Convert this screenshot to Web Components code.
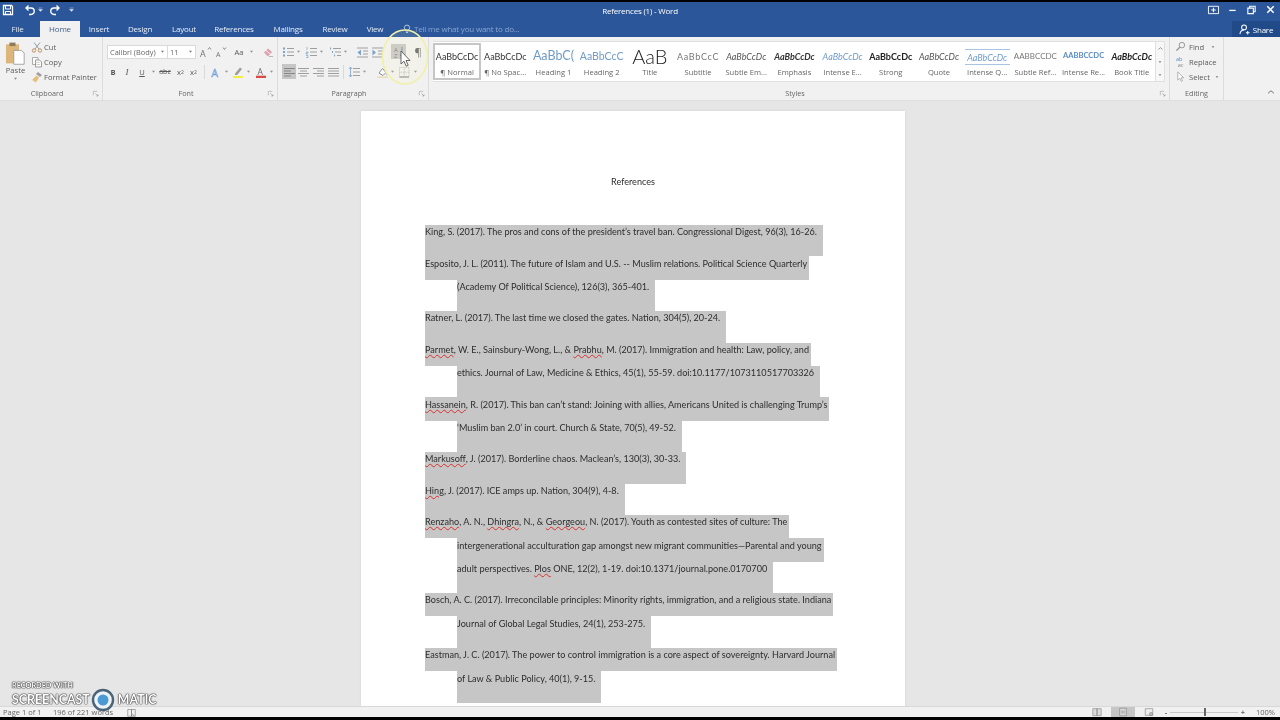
<!DOCTYPE html>
<html lang="en">
<head>
<meta charset="utf-8">
<title>References (1) - Word</title>
<style>
  html, body { margin: 0; height: 100%; background: #000; overflow: hidden; }
</style>
</head>
<body>
<word-app>
  <word-titlebar></word-titlebar>
  <word-ribbon></word-ribbon>
  <word-document>
    <ref-entry><ref-line>King, S. (2017). The pros and cons of the president’s travel ban. Congressional Digest, 96(3), 16-26.</ref-line></ref-entry>
    <ref-entry>
      <ref-line>Esposito, J. L. (2011). The future of Islam and U.S. -- Muslim relations. Political Science Quarterly</ref-line>
      <ref-line>(Academy Of Political Science), 126(3), 365-401.</ref-line>
    </ref-entry>
    <ref-entry><ref-line>Ratner, L. (2017). The last time we closed the gates. Nation, 304(5), 20-24.</ref-line></ref-entry>
    <ref-entry>
      <ref-line><u>Parmet</u>, W. E., Sainsbury-Wong, L., &amp; <u>Prabhu</u>, M. (2017). Immigration and health: Law, policy, and</ref-line>
      <ref-line>ethics. Journal of Law, Medicine &amp; Ethics, 45(1), 55-59. doi:10.1177/1073110517703326</ref-line>
    </ref-entry>
    <ref-entry>
      <ref-line><u>Hassanein</u>, R. (2017). This ban can’t stand: Joining with allies, Americans United is challenging Trump’s</ref-line>
      <ref-line>‘Muslim ban 2.0’ in court. Church &amp; State, 70(5), 49-52.</ref-line>
    </ref-entry>
    <ref-entry><ref-line><u>Markusoff</u>, J. (2017). Borderline chaos. Maclean’s, 130(3), 30-33.</ref-line></ref-entry>
    <ref-entry><ref-line><u>Hing</u>, J. (2017). ICE amps up. Nation, 304(9), 4-8.</ref-line></ref-entry>
    <ref-entry>
      <ref-line><u>Renzaho</u>, A. N., <u>Dhingra</u>, N., &amp; <u>Georgeou</u>, N. (2017). Youth as contested sites of culture: The</ref-line>
      <ref-line>intergenerational acculturation gap amongst new migrant communities—Parental and young</ref-line>
      <ref-line>adult perspectives. <u>Plos</u> ONE, 12(2), 1-19. doi:10.1371/journal.pone.0170700</ref-line>
    </ref-entry>
    <ref-entry>
      <ref-line>Bosch, A. C. (2017). Irreconcilable principles: Minority rights, immigration, and a religious state. Indiana</ref-line>
      <ref-line>Journal of Global Legal Studies, 24(1), 253-275.</ref-line>
    </ref-entry>
    <ref-entry>
      <ref-line>Eastman, J. C. (2017). The power to control immigration is a core aspect of sovereignty. Harvard Journal</ref-line>
      <ref-line>of Law &amp; Public Policy, 40(1), 9-15.</ref-line>
    </ref-entry>
  </word-document>
  <word-statusbar></word-statusbar>
  <cursor-ring></cursor-ring>
  <cast-mark></cast-mark>
</word-app>

<script>
const UI_FONT = '"Open Sans", "Noto Sans", sans-serif';

const ICONS = {
  caret: '<path d="M4 5h4L6 7.5z" fill="#777"/>',
  save: '<path d="M1.5 1.5h8l1 1v8h-9z" fill="none" stroke="#fff" stroke-width="1.3"/><path d="M3.5 2v3h5V2M3.5 10.5V7.5h5v3" fill="none" stroke="#fff"/>',
  undo: '<path d="M4.5 1.5 2 4l2.5 2.5M2.5 4H7a2.7 2.7 0 0 1 0 6.5H5" fill="none" stroke="#fff" stroke-width="1.4"/>',
  redo: '<path d="M7.5 1.5 10 4 7.5 6.5M9.5 4H5a2.7 2.7 0 0 0 0 6.5h2" fill="none" stroke="#fff" stroke-width="1.4"/>',
  qat: '<path d="M3.5 4h5M3.5 6h5L6 8.5z" fill="#dfe7f3" stroke="#dfe7f3" stroke-width=".6"/>',
  ribbonopts: '<path d="M.5 2.5h11v8H.5z" fill="none" stroke="#fff"/><path d="M6 4v5M3.5 6.5h5" stroke="#fff" stroke-width="1.2"/>',
  minimize: '<path d="M2.5 7h7" stroke="#fff" stroke-width="1.4"/>',
  restore: '<path d="M2 4.5h6v6H2zM4 4.5v-2h6v6H8" fill="none" stroke="#fff" stroke-width="1.2"/>',
  close: '<path d="M2.5 2.5l7 7M9.5 2.5l-7 7" stroke="#fff" stroke-width="1.7"/>',
  bulb: '<circle cx="6" cy="4.5" r="3.2" fill="none" stroke="#c9d5ea"/><path d="M4.5 8.5h3M4.7 10.2h2.6" stroke="#c9d5ea"/>',
  person: '<circle cx="5.5" cy="3.8" r="2.6" fill="none" stroke="#fff" stroke-width="1.1"/><path d="M1 11c.4-3 2-4.4 4.5-4.4M7.5 9.5h4M9.5 7.5v4" fill="none" stroke="#fff" stroke-width="1.1"/>',
  cut: '<path d="M3 1.5 8 8M9 1.5 4 8" stroke="#7a8793" stroke-width="1"/><circle cx="3" cy="9.5" r="1.7" fill="none" stroke="#b07a3c"/><circle cx="9" cy="9.5" r="1.7" fill="none" stroke="#b07a3c"/>',
  copy: '<path d="M1.5 1.5h5.5v7H1.5z" fill="#fff" stroke="#9a9a9a"/><path d="M4.5 4h4l2 2v5h-6z" fill="#fff" stroke="#8a8a8a"/><path d="M5.5 6.5h3M5.5 8.5h3.5" stroke="#c4a877" stroke-width=".7"/>',
  painter: '<path d="M7 1l4 3-2 2-4-3z" fill="#8b8b8b"/><path d="M5.5 4.5 8 6.5 5 11.5 1 9z" fill="#e3b25a"/>',
  paste: '<path d="M1 5h15v22H1z" fill="#dcb67a"/><path d="M5 3h7v4H5z" fill="#8f7a5c"/><path d="M10 12h9l3 3v13H10z" fill="#fff" stroke="#9b9b9b"/>',
  pastecaret: '<path d="M4 5h4L6 7.5z" fill="#888"/>',
  grow: '<text x="0" y="10.500" font-size="9" font-family="Open Sans" fill="#555">A</text><path d="M8 3.5 9.5 1.5 11 3.5" fill="none" stroke="#555" stroke-width=".8"/>',
  shrink: '<text x="1" y="10.500" font-size="7" font-family="Open Sans" fill="#555">A</text><path d="M8 1.5 9.5 3.5 11 1.5" fill="none" stroke="#555" stroke-width=".8"/>',
  eraser: '<path d="M2 6.5 6 2.5l4 3.5-4 4.5z" fill="#d98c9c"/><path d="M4 4.5l4 3.5" stroke="#fff" stroke-width=".9"/><path d="M7 10.5h4" stroke="#a8a8a8"/>',
  textfx: '<text x="1.500" y="11" font-size="10.500" font-family="Open Sans" fill="#cfe2f6" stroke="#4d8ad0" stroke-width=".6">A</text>',
  highlight: '<path d="M3 7.5 8 1.5l2 1.6-4.8 6H3z" fill="#8a8a8a"/><path d="M1 10h10v2H1z" fill="#f2ee1a"/>',
  fontcolor: '<text x="2.500" y="9" font-size="8.500" font-family="Open Sans" fill="#444">A</text><path d="M1 9.7h10V12H1z" fill="#d8201c"/>',
  bullets: '<g stroke="#8a8a8a"><path d="M5 2.5h7M5 6h7M5 9.5h7"/></g><g fill="#5f8fc4"><rect x="1" y="1.5" width="2" height="2"/><rect x="1" y="5" width="2" height="2"/><rect x="1" y="8.5" width="2" height="2"/></g>',
  numbers: '<g stroke="#8a8a8a"><path d="M5 2.5h7M5 6h7M5 9.5h7"/></g><path d="M2 1v3M1 6h2v1H1v1h2M1 9.5h2v2H1" fill="none" stroke="#5f8fc4" stroke-width=".7"/>',
  multilevel: '<g stroke="#8a8a8a"><path d="M4 2.5h8M6 6h6M8 9.5h4"/></g><path d="M1.5 1.5v2M3.5 5v2M5.5 8.5v2" stroke="#5f8fc4"/>',
  indentdec: '<path d="M1 2h11M7 5h5M7 8h5M1 11h11" stroke="#8a8a8a"/><path d="M5 3.5 1.5 6.5 5 9.5z" fill="#5f8fc4"/>',
  indentinc: '<path d="M1 2h11M7 5h5M7 8h5M1 11h11" stroke="#8a8a8a"/><path d="M1.5 3.5 5 6.5 1.5 9.5z" fill="#5f8fc4"/>',
  sort: '<text x="1" y="5.5" font-size="6" font-family="Open Sans" fill="#666">A</text><text x="1" y="11.5" font-size="6" font-family="Open Sans" fill="#666">Z</text><path d="M9 1v9.5M7 8.5l2 2.5 2-2.5" fill="none" stroke="#5d7ea8"/>',
  alignl: '<path d="M1 2.5h11M1 5h7M1 7.5h11M1 10h7" stroke="#777"/>',
  alignc: '<path d="M1 2.5h11M3 5h7M1 7.5h11M3 10h7" stroke="#8a8a8a"/>',
  alignr: '<path d="M1 2.5h11M5 5h7M1 7.5h11M5 10h7" stroke="#8a8a8a"/>',
  justify: '<path d="M1 2.5h11M1 5h11M1 7.5h11M1 10h11" stroke="#8a8a8a"/>',
  linespace: '<path d="M5 2.5h7M5 6h7M5 9.5h7" stroke="#8a8a8a"/><path d="M2.5 1v10M1 3l1.5-2L4 3M1 9l1.5 2L4 9" fill="none" stroke="#5f8fc4" stroke-width=".8"/>',
  shading: '<path d="M3 7 6.5 2.5l3.5 4-3 3z" fill="#fff" stroke="#777"/><path d="M1 10.5h11V12H1z" fill="#e8d8a8"/><path d="M10.5 7.5c1 1.200 1 2 0 2" fill="#5b8fc9"/>',
  borders: '<path d="M1.500 1.500h9.500v9.500H1.500zM6.250 1.500v9.500M1.500 6.250h9.500" fill="none" stroke="#b4b4b4" stroke-dasharray="1 .7"/><path d="M1.500 11h9.500" stroke="#666"/>',
  find: '<circle cx="7.500" cy="4.500" r="3" fill="none" stroke="#777"/><path d="M5.200 6.800 1.500 10.500" stroke="#777" stroke-width="1.400"/>',
  replace: '<text x="1" y="5.500" font-size="6" font-family="Open Sans" fill="#2f6fb5">ab</text><text x="3" y="11.500" font-size="6" font-family="Open Sans" fill="#666">ac</text>',
  select: '<path d="M3 1v9l2.200-2 1.600 3.400 1.400-.7-1.600-3.300h3z" fill="#fff" stroke="#8a8a8a" stroke-width=".8"/>',
  launcher: '<path d="M2 2h6M2 2v6" stroke="#999" stroke-width=".8" fill="none"/><path d="M9 9 5 5M9 9V6.500M9 9H6.500" stroke="#888" stroke-width=".8" fill="none"/>',
  collapse: '<path d="M2.500 7.500 6 4.500l3.500 3" fill="none" stroke="#666" stroke-width="1.100"/>',
  book: '<path d="M1 2h5v9H1zM6 2h5v9H6z" fill="#f1f1f1" stroke="#777" stroke-width=".8"/><path d="M7 8l3 3" stroke="#777"/>',
  viewread: '<path d="M1 2h5v8.500H1zM6 2h5v8.500H6z" fill="#dcdcdc" stroke="#8a8a8a" stroke-width=".8"/>',
  viewprint: '<path d="M2 1.500h8v9H2z" fill="#d8d8d8" stroke="#8a8a8a" stroke-width=".8"/><path d="M3.500 5h5M3.500 7h5" stroke="#8a8a8a" stroke-width=".7"/>',
  viewweb: '<path d="M1.500 2h9v8h-9z" fill="#eee" stroke="#8a8a8a" stroke-width=".8"/><circle cx="8.500" cy="8.500" r="2" fill="#bbb" stroke="#777" stroke-width=".6"/>'
};

function iconSvg(name, w = 12, h = 12) {
  const box = name === "paste" ? "0 0 24 30" : "0 0 12 12";
  return `<svg width="${w}" height="${h}" viewBox="${box}" style="display:block;flex:none;overflow:visible">${ICONS[name] || ""}</svg>`;
}

class WordApp extends HTMLElement {
  connectedCallback() {
    this.attachShadow({ mode: "open" }).innerHTML = `
      <style>
        :host { display: flex; flex-direction: column; width: 1280px; height: 715px;
          position: relative; overflow: hidden; background: #e6e6e6; filter: blur(.35px); font-family: ${UI_FONT}; }
      </style>
      <slot></slot>`;
    this.style.marginTop = "2px";
  }
}

class WordTitlebar extends HTMLElement {
  connectedCallback() {
    const tabs = [["File", 35], ["Home", 40], ["Insert", 38], ["Design", 44], ["Layout", 44], ["References", 56], ["Mailings", 52], ["Review", 42], ["View", 38]];
    this.attachShadow({ mode: "open" }).innerHTML = `
      <style>
        :host { display: block; flex: none; height: 35px; background: #2b579a; color: #fff; font-size: 8px; letter-spacing: -.2px; }
        .top { height: 19px; display: grid; grid-template-columns: 1fr auto 1fr; align-items: center; }
        .qat, .win { display: flex; align-items: center; }
        .qat { padding-left: 2px; margin-top: -4px; }
        .win { justify-content: flex-end; margin-top: -4px; }
        .win span { width: 19px; display: flex; justify-content: center; }
        .name { margin-top: -3px; }
        .tabs { height: 16px; display: flex; align-items: stretch; }
        .tab { display: flex; align-items: center; justify-content: center; flex: none; color: #e4ebf5; padding-bottom: 1px; box-sizing: border-box; }
        .tab.on { background: #f1f1f1; color: #44608c; margin-left: 5px; }
        .tell { display: flex; align-items: center; gap: 2px; margin-left: 8px; color: #87a4d2; padding-bottom: 1px; }
        .share { margin-left: auto; width: 48px; background: #204a88; display: flex; align-items: center; justify-content: center; gap: 3px; }
      </style>
      <div class="top">
        <div class="qat">
          <span style="width:12px">${iconSvg("save")}</span>
          <span style="width:10px"></span>
          <span>${iconSvg("undo")}</span><span>${iconSvg("qat", 9, 9)}</span>
          <span style="width:4px"></span>
          <span>${iconSvg("redo")}</span>
          <span style="width:6px"></span>
          <span>${iconSvg("qat", 9, 9)}</span>
        </div>
        <div class="name">References (1) - Word</div>
        <div class="win">
          <span>${iconSvg("ribbonopts", 11, 11)}</span>
          <span>${iconSvg("minimize", 11, 11)}</span>
          <span>${iconSvg("restore", 11, 11)}</span>
          <span>${iconSvg("close", 11, 11)}</span>
        </div>
      </div>
      <div class="tabs">
        ${tabs.map(([t, w]) => `<div class="tab ${t === "Home" ? "on" : ""}" style="width:${w}px">${t}</div>`).join("")}
        <div class="tell">${iconSvg("bulb", 10, 10)}<span>Tell me what you want to do...</span></div>
        <div class="share">${iconSvg("person", 11, 11)}<span>Share</span></div>
      </div>`;
  }
}

class RibbonTool extends HTMLElement {
  connectedCallback() {
    const w = this.getAttribute("w") || 14;
    const icon = this.getAttribute("icon");
    const size = this.getAttribute("size") || 12;
    const root = this.attachShadow({ mode: "open" });
    root.innerHTML = `
      <style>
        :host { display: flex; flex: none; align-items: center; justify-content: center; height: 15px; width: ${w}px;
          font-size: 7.6px; color: #5a5a5a; white-space: nowrap; }
        :host([on]) { background: #c6c6c6; }
        svg { opacity: .8; }
      </style>
      ${icon ? iconSvg(icon, size, size) : ""}<slot></slot>`;
  }
}

class RibbonGroup extends HTMLElement {
  connectedCallback() {
    const hasLauncher = this.hasAttribute("launcher");
    const launcher = hasLauncher ? `<span class="launch">${iconSvg("launcher", 8, 8)}</span>` : "";
    this.attachShadow({ mode: "open" }).innerHTML = `
      <style>
        :host { display: flex; flex-direction: column; flex: none; box-sizing: border-box; width: ${this.getAttribute("w")}px;
          border-right: 1px solid #dcdcdc; position: relative; }
        .body { height: 51px; padding-top: 7px; box-sizing: border-box; }
        .label { height: 10px; line-height: 10px; text-align: center; font-size: 7.2px; color: #666; position: relative;
          padding-right: ${hasLauncher ? 8 : 0}px; }
        .launch { position: absolute; right: 2px; top: 2px; }
      </style>
      <div class="body"><slot></slot></div>
      <div class="label">${this.getAttribute("label")}${launcher}</div>`;
  }
}

class StyleChip extends HTMLElement {
  connectedCallback() {
    const prev = this.getAttribute("preview") || "AaBbCcDc";
    this.attachShadow({ mode: "open" }).innerHTML = `
      <style>
        :host { display: flex; flex-direction: column; align-items: center; flex: none; width: 48.2px; height: 37px; box-sizing: border-box; margin-top: 1px; }
        :host([on]) { outline: 2px solid #c6c6c6; outline-offset: -2px; }
        .prev { height: 22px; width: 45px; overflow: hidden; white-space: nowrap; display: flex; align-items: center; justify-content: center;
          margin-top: 2px; font-family: Lato, sans-serif; color: #333; font-size: 9px; line-height: 1; }
        .name { font-size: 7.6px; color: #666; white-space: nowrap; }
      </style>
      <div class="prev" style="${this.getAttribute("look") || ""}"><span>${prev}</span></div>
      <div class="name">${this.getAttribute("name")}</div>`;
  }
}

class WordRibbon extends HTMLElement {
  connectedCallback() {
    const chips = [
      ["¶ Normal", "", "", "on"],
      ["¶ No Spac...", "", ""],
      ["Heading 1", "color:#6f9bcb;font-size:12.5px", "AaBbC("],
      ["Heading 2", "color:#6f9bcb;font-size:10.5px", "AaBbCcC"],
      ["Title", "font-size:20px;font-weight:300;color:#222", "AaB"],
      ["Subtitle", "color:#777;letter-spacing:.7px", "AaBbCcC"],
      ["Subtle Em...", "font-style:italic;color:#555", ""],
      ["Emphasis", "font-style:italic;color:#333;font-weight:700", ""],
      ["Intense E...", "font-style:italic;color:#6f9bd0", ""],
      ["Strong", "font-weight:700;color:#222", ""],
      ["Quote", "font-style:italic;color:#555", ""],
      ["Intense Q...", "font-style:italic;color:#6f9bd0;border-top:1px solid #a9c3e3;border-bottom:1px solid #a9c3e3;height:14px;margin:6px 0 2px", ""],
      ["Subtle Ref...", "color:#777;font-size:8px", "AABBCCDC"],
      ["Intense Re...", "color:#5a8cc6;font-size:7.600px;font-weight:700", "AABBCCDC"],
      ["Book Title", "font-style:italic;font-weight:700;color:#222", ""]
    ];
    this.attachShadow({ mode: "open" }).innerHTML = `
      <style>
        :host { display: flex; flex: none; height: 63px; background: #f1f1f1; border-bottom: 1px solid #dedede; box-sizing: content-box; }
        .row { display: flex; align-items: center; }
        .clip { display: flex; margin-top: -3px; }
        .paste { width: 31px; display: flex; flex-direction: column; align-items: center; font-size: 7.6px; color: #5a5a5a; }
        .paste svg { margin-top: -1px; }
        .clipitems { display: flex; flex-direction: column; margin-top: -2px; }
        .clipitems r-tool { justify-content: flex-start; }
        .combo { background: #fff; border: 1px solid #dadada; box-sizing: border-box; height: 14px; display: flex; align-items: center; font-size: 7.4px; color: #666; justify-content: space-between; padding-left: 2px; white-space: nowrap; }
        .sep { width: 1px; height: 14px; background: #dadada; flex: none; }
        .sp { display: block; flex: none; }
        .rows { display: flex; flex-direction: column; gap: 5px; }
        .gallery { display: flex; margin-left: 4px; width: 723px; height: 41px; background: #fff; box-sizing: border-box; border: 1px solid #e0e0e0; border-left: 0; }
        .scroll { width: 9px; height: 41px; display: flex; flex-direction: column; background: #f7f7f7; border: 1px solid #e0e0e0; border-left: 0; box-sizing: border-box; }
        .scroll span { flex: 1; display: flex; align-items: center; justify-content: center; }
        .styles { display: flex; margin-top: -3px; }
        .collapse { margin-left: auto; display: flex; align-items: flex-end; padding: 0 4px 3px 0; }
        .edit { display: flex; flex-direction: column; margin-top: -5px; padding-left: 5px; }
        .edit r-tool { justify-content: flex-start; gap: 3px; width: 48px; }
      </style>
      <r-group w="103" label="Clipboard" launcher>
        <div class="clip">
          <div class="paste">${iconSvg("paste", 21, 26)}<span style="margin-top:-1px">Paste</span>${iconSvg("pastecaret", 9, 9)}</div>
          <div class="clipitems">
            <r-tool w="66" icon="cut"><span style="margin-left:1px">Cut</span></r-tool>
            <r-tool w="66" icon="copy"><span style="margin-left:1px">Copy</span></r-tool>
            <r-tool w="66" icon="painter"><span style="margin-left:1px">Format Painter</span></r-tool>
          </div>
        </div>
      </r-group>
      <r-group w="175" label="Font" launcher>
        <div class="rows">
          <div class="row">
            <i class="sp" style="width:4px"></i>
            <div class="combo" style="width:61px"><span>Calibri (Body)</span>${iconSvg("caret", 9, 9)}</div>
            <div class="combo" style="width:29px;margin-left:-1px"><span>11</span>${iconSvg("caret", 9, 9)}</div>
            <i class="sp" style="width:2px"></i>
            <r-tool w="15" icon="grow"></r-tool>
            <r-tool w="15" icon="shrink"></r-tool>
            <i class="sp" style="width:2px"></i>
            <r-tool w="18">Aa</r-tool><r-tool w="7" icon="caret" size="9"></r-tool>
            <i class="sp" style="width:6px"></i>
            <r-tool w="14" icon="eraser"></r-tool>
          </div>
          <div class="row">
            <i class="sp" style="width:3px"></i>
            <r-tool w="14"><b>B</b></r-tool>
            <r-tool w="14"><i style="font-family:Liberation Serif;font-size:9px">I</i></r-tool>
            <r-tool w="16"><u>U</u></r-tool><r-tool w="7" icon="caret" size="9"></r-tool>
            <r-tool w="16"><s style="font-size:7px">abc</s></r-tool>
            <i class="sp" style="width:1px"></i>
            <r-tool w="13">x<sub style="font-size:5px">2</sub></r-tool>
            <r-tool w="13">x<sup style="font-size:5px">2</sup></r-tool>
            <i class="sp" style="width:4px"></i><span class="sep"></span><i class="sp" style="width:4px"></i>
            <r-tool w="14" icon="textfx"></r-tool><r-tool w="7" icon="caret" size="9"></r-tool>
            <i class="sp" style="width:1px"></i>
            <r-tool w="14" icon="highlight"></r-tool><r-tool w="7" icon="caret" size="9"></r-tool>
            <i class="sp" style="width:2px"></i>
            <r-tool w="14" icon="fontcolor"></r-tool><r-tool w="7" icon="caret" size="9"></r-tool>
          </div>
        </div>
      </r-group>
      <r-group w="151" label="Paragraph" launcher>
        <div class="rows">
          <div class="row">
            <i class="sp" style="width:3px"></i>
            <r-tool w="14" icon="bullets"></r-tool><r-tool w="7" icon="caret" size="9"></r-tool>
            <i class="sp" style="width:2px"></i>
            <r-tool w="14" icon="numbers"></r-tool><r-tool w="7" icon="caret" size="9"></r-tool>
            <i class="sp" style="width:3px"></i>
            <r-tool w="14" icon="multilevel"></r-tool><r-tool w="7" icon="caret" size="9"></r-tool>
            <i class="sp" style="width:6px"></i>
            <r-tool w="14" icon="indentdec"></r-tool>
            <i class="sp" style="width:1px"></i>
            <r-tool w="14" icon="indentinc"></r-tool>
            <i class="sp" style="width:7px"></i>
            <r-tool w="15" icon="sort" on></r-tool>
            <i class="sp" style="width:5px"></i>
            <r-tool w="14"><span style="font-size:11px;color:#666">¶</span></r-tool>
          </div>
          <div class="row">
            <i class="sp" style="width:4px"></i>
            <r-tool w="14" icon="alignl" on></r-tool>
            <r-tool w="14" icon="alignc"></r-tool>
            <i class="sp" style="width:1px"></i>
            <r-tool w="14" icon="alignr"></r-tool>
            <i class="sp" style="width:1px"></i>
            <r-tool w="14" icon="justify"></r-tool>
            <i class="sp" style="width:3px"></i><span class="sep"></span><i class="sp" style="width:3px"></i>
            <r-tool w="14" icon="linespace"></r-tool><r-tool w="7" icon="caret" size="9"></r-tool>
            <i class="sp" style="width:7px"></i>
            <r-tool w="14" icon="shading"></r-tool><r-tool w="7" icon="caret" size="9"></r-tool>
            <i class="sp" style="width:1px"></i>
            <r-tool w="14" icon="borders"></r-tool><r-tool w="8" icon="caret" size="9"></r-tool>
          </div>
        </div>
      </r-group>
      <r-group w="741" label="Styles" launcher>
        <div class="styles">
          <div class="gallery">
            ${chips.map(([n, look, prev, on]) => `<style-chip name="${n}" look="${look}" ${prev ? `preview="${prev}"` : ""} ${on ? "on" : ""}></style-chip>`).join("")}
          </div>
          <div class="scroll">
            <span>${iconSvg("collapse", 7, 7)}</span>
            <span>${iconSvg("caret", 8, 8)}</span>
            <span>${iconSvg("caret", 8, 8)}</span>
          </div>
        </div>
      </r-group>
      <r-group w="54" label="Editing">
        <div class="edit">
          <r-tool icon="find" size="11"><span>Find</span><span style="margin-left:2px">${iconSvg("caret", 8, 8)}</span></r-tool>
          <r-tool icon="replace" size="11"><span>Replace</span></r-tool>
          <r-tool icon="select" size="11"><span>Select</span><span>${iconSvg("caret", 8, 8)}</span></r-tool>
        </div>
      </r-group>
      <div class="collapse">${iconSvg("collapse", 10, 10)}</div>`;
  }
}

class WordDocument extends HTMLElement {
  connectedCallback() {
    this.attachShadow({ mode: "open" }).innerHTML = `
      <style>
        :host { display: flex; justify-content: flex-start; flex: 1; min-height: 0; overflow: hidden; padding: 10px 0 0 361px; background: #e6e6e6; }
        .page { width: 544px; background: #fff; box-shadow: 0 0 2px #cfcfcf; box-sizing: border-box; padding: 64px 0 0 64px; height: 900px;
          font-family: Lato, "Liberation Sans", sans-serif; font-size: 9.1px; color: #2e2e2e; }
        h1 { margin: 0 0 38px -64px; font: inherit; line-height: 13px; height: 12px; text-align: center; }
      </style>
      <div class="page">
        <h1>References</h1>
        <slot></slot>
      </div>`;
  }
}

class RefEntry extends HTMLElement {
  connectedCallback() {
    this.attachShadow({ mode: "open" }).innerHTML = `
      <style>:host { display: block; }</style>
      <slot></slot>`;
  }
}

class RefLine extends HTMLElement {
  connectedCallback() {
    const hanging = this.previousElementSibling !== null;
    const last = this.nextElementSibling === null;
    this.attachShadow({ mode: "open" }).innerHTML = `
      <style>
        :host { display: block; white-space: nowrap; height: ${last ? 31.4 : 23.4}px; margin-left: ${hanging ? 32 : 0}px; }
        .hl { display: inline-block; height: 100%; box-sizing: border-box; padding-top: 1.3px; background: #c6c6c6; line-height: 12px; padding-right: ${last ? 6 : 2}px; vertical-align: top; }
        ::slotted(u) { text-decoration: underline wavy #d9302c .6px; text-underline-offset: 1px; }
      </style>
      <span class="hl"><slot></slot></span>`;
  }
}

class WordStatusbar extends HTMLElement {
  connectedCallback() {
    this.attachShadow({ mode: "open" }).innerHTML = `
      <style>
        :host { display: flex; flex: none; height: 11px; align-items: center; background: #f1f1f1; border-top: 1px solid #d8d8d8; box-sizing: border-box;
          font-size: 7.500px; color: #666; padding-left: 3px; position: relative; z-index: 1; }
        .view { width: 24px; height: 11px; display: flex; align-items: center; justify-content: center; flex: none; }
        .view.on { background: #c6c6c6; }
        .zoom { position: relative; width: 68px; height: 1px; background: #c8c8c8; flex: none; }
        .zoom b { position: absolute; left: 34px; top: -4px; width: 2px; height: 8px; background: #666; }
      </style>
      <span style="width:50px">Page 1 of 1</span>
      <span style="width:74px">196 of 221 words</span>
      ${iconSvg("book", 9, 9)}
      <span style="flex:1"></span>
      <span class="view">${iconSvg("viewread", 10, 10)}</span>
      <i style="width:2px"></i>
      <span class="view on">${iconSvg("viewprint", 10, 10)}</span>
      <i style="width:2px"></i>
      <span class="view">${iconSvg("viewweb", 10, 10)}</span>
      <span style="width:8px;text-align:center;font-weight:700;margin-left:1px">-</span>
      <span class="zoom"><b></b></span>
      <span style="width:8px;text-align:center;font-weight:700;margin-left:1px;margin-right:3px">+</span>
      <span style="width:25px;text-align:right;padding-right:5px">100%</span>`;
  }
}

class CursorRing extends HTMLElement {
  connectedCallback() {
    this.attachShadow({ mode: "open" }).innerHTML = `
      <style>
        :host { position: absolute; left: 381px; top: 25px; width: 48px; height: 60px; pointer-events: none; }
      </style>
      <svg width="48" height="60" viewBox="0 0 48 60">
        <ellipse cx="24" cy="30" rx="22.500" ry="27" fill="#fbfbc8" fill-opacity=".12" stroke="#f0f0a8" stroke-width="1.600"/>
        <path d="M20 24v13l3-2.800 2.200 5 2-.9-2.200-4.800h4z" fill="#fff" stroke="#444" stroke-width=".8"/>
      </svg>`;
  }
}

class CastMark extends HTMLElement {
  connectedCallback() {
    this.attachShadow({ mode: "open" }).innerHTML = `
      <style>
        :host { position: absolute; left: 12px; top: 680px; width: 150px; height: 34px; color: #fff; font-family: Lato, sans-serif; font-weight: 700;
          text-shadow: 0 0 1.500px #222, 0 0 1px #222, 0 0 1px #222; line-height: 1; z-index: 2; }
        .rec { font-size: 7.300px; height: 12px; }
        .brand { display: flex; align-items: center; font-size: 12.400px; margin-top: -6px; }
        svg { margin: 0 3px 0 1px; flex: none; }
      </style>
      <div class="rec">RECORDED WITH</div>
      <div class="brand"><span>SCREENCAST</span>
        <svg width="24" height="24" viewBox="0 0 24 24"><circle cx="12" cy="12" r="10" fill="#eef3f7" stroke="#4a6478" stroke-width="2.400"/><circle cx="12" cy="12" r="5.500" fill="#4a9ad4"/></svg>
        <span>MATIC</span></div>`;
  }
}

customElements.define("word-app", WordApp);
customElements.define("word-titlebar", WordTitlebar);
customElements.define("r-tool", RibbonTool);
customElements.define("r-group", RibbonGroup);
customElements.define("style-chip", StyleChip);
customElements.define("word-ribbon", WordRibbon);
customElements.define("word-document", WordDocument);
customElements.define("ref-entry", RefEntry);
customElements.define("ref-line", RefLine);
customElements.define("word-statusbar", WordStatusbar);
customElements.define("cursor-ring", CursorRing);
customElements.define("cast-mark", CastMark);
</script>
</body>
</html>
